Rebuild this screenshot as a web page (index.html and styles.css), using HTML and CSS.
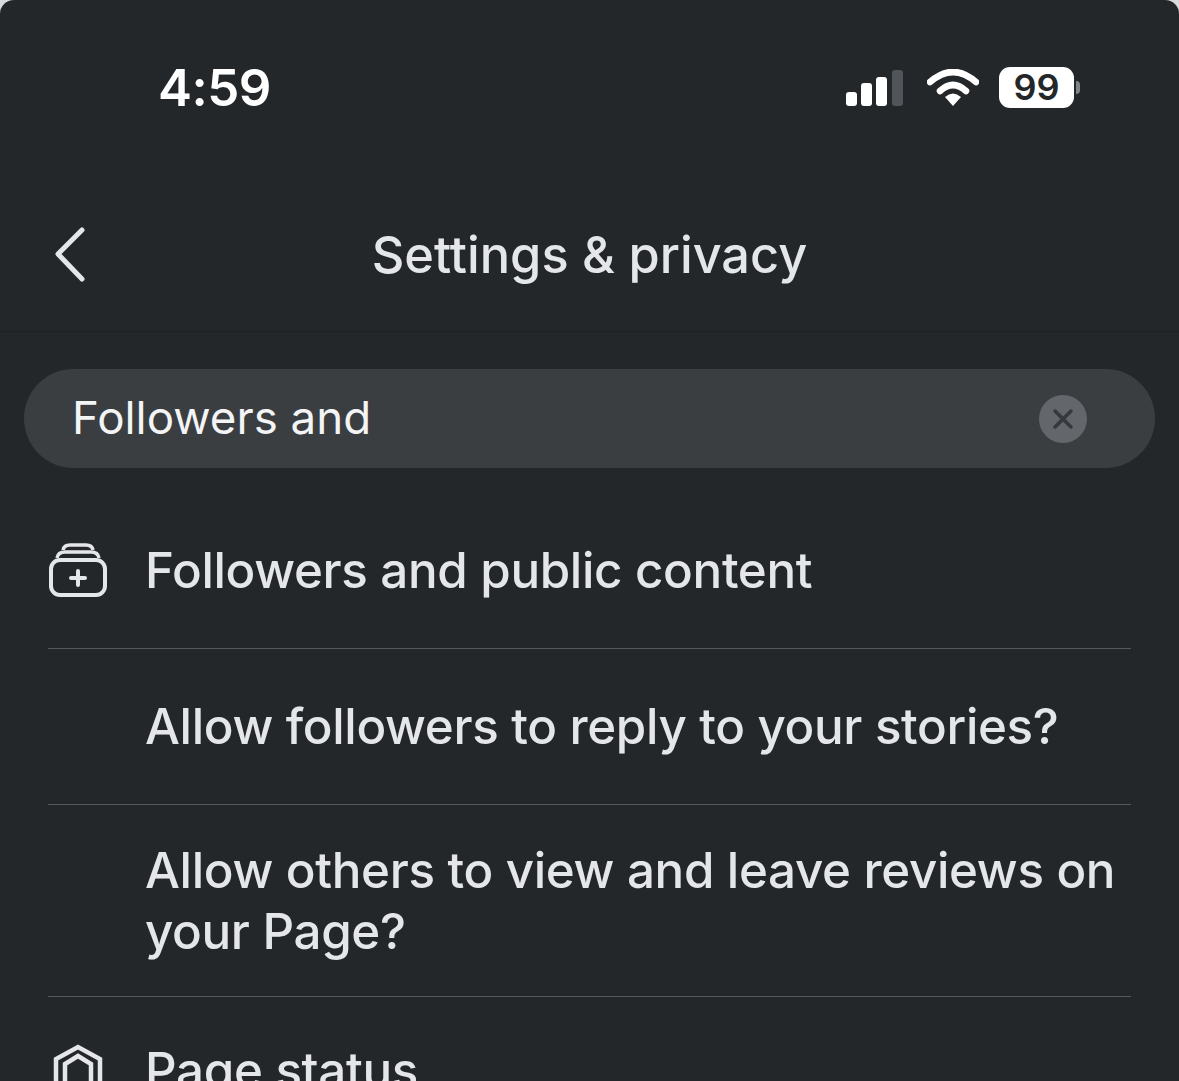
FILE: index.html
```html
<!DOCTYPE html>
<html lang="en">
<head>
  <meta charset="UTF-8" />
  <meta name="viewport" content="width=device-width, initial-scale=1.0"/>
  <title>Settings &amp; privacy</title>
  <link rel="stylesheet" href="styles.css">
</head>
<body>
  <div class="screen">
    <div class="status-bar">
      <span class="clock">4:59</span>
      <div class="status-icons">
        <svg class="signal" width="58" height="38" viewBox="0 0 58 38">
          <rect x="0" y="23" width="11" height="14" rx="3" fill="#fff"/>
          <rect x="15" y="14" width="11" height="23" rx="3" fill="#fff"/>
          <rect x="30" y="8" width="11" height="29" rx="3" fill="#fff"/>
          <rect x="46" y="1" width="11" height="36" rx="3" fill="#50555a"/>
        </svg>
        <svg class="wifi" width="52" height="38" viewBox="0 0 52 38">
          <path d="M3 13 Q26 -7 49 13" fill="none" stroke="#fff" stroke-width="6.5" stroke-linecap="round"/>
          <path d="M13 22 Q26 10 39 22" fill="none" stroke="#fff" stroke-width="6.5" stroke-linecap="round"/>
          <path d="M18 28 Q26 21 34 28 L26 37 Z" fill="#fff"/>
        </svg>
        <div class="battery">
          <span class="battery-body">99</span>
          <span class="battery-tip"></span>
        </div>
      </div>
    </div>

    <header class="nav">
      <svg class="back" width="34" height="58" viewBox="0 0 34 58">
        <path d="M28 4 L4 28 L28 53" fill="none" stroke="#e4e6e9" stroke-width="5" stroke-linecap="round" stroke-linejoin="round"/>
      </svg>
      <h1>Settings &amp; privacy</h1>
    </header>

    <div class="search">
      <span class="search-text">Followers and</span>
      <span class="search-clear">
        <svg width="48" height="48" viewBox="0 0 48 48">
          <path d="M16 16 L32 32 M32 16 L16 32" stroke="#35383c" stroke-width="3.5" stroke-linecap="round"/>
        </svg>
      </span>
    </div>

    <ul class="results">
      <li class="row">
        <svg class="row-icon" width="58" height="54" viewBox="0 0 58 54">
          <rect x="2" y="17" width="54" height="35" rx="9" fill="none" stroke="#e4e6e9" stroke-width="4"/>
          <path d="M8 15 Q9 9 16 9 H42 Q49 9 50 15" fill="none" stroke="#e4e6e9" stroke-width="3.5"/>
          <path d="M14 7 Q15 2 21 2 H37 Q43 2 44 7" fill="none" stroke="#e4e6e9" stroke-width="3.5"/>
          <path d="M29 28 V42 M22 35 H36" stroke="#e4e6e9" stroke-width="4" stroke-linecap="round"/>
        </svg>
        <span>Followers and public content</span>
      </li>
      <li class="row">
        <span>Allow followers to reply to your stories?</span>
      </li>
      <li class="row">
        <span>Allow others to view and leave reviews on your Page?</span>
      </li>
      <li class="row row-last">
        <svg class="row-icon" width="60" height="60" viewBox="0 0 60 60">
          <path d="M6 50 V15 L28 3 L50 15 V50" fill="none" stroke="#e4e6e9" stroke-width="4.5"/>
          <path d="M15 50 V20 L28 12 L41 20 V50" fill="none" stroke="#e4e6e9" stroke-width="4.5"/>
        </svg>
        <span>Page status</span>
      </li>
    </ul>
  </div>
</body>
</html>
```

FILE: styles.css
```css
html, body { margin: 0; height: 100%; overflow: hidden; background: #d9dadb; }
body { font-family: Inter, "Liberation Sans", sans-serif; color: #e4e6e9; }

.screen { background: #24272a; height: 1081px; border-radius: 14px 14px 0 0; overflow: hidden; }

.status-bar { height: 174px; display: flex; align-items: flex-start; justify-content: space-between; padding: 0 99px 0 158px; }
.clock { font-size: 51px; font-weight: 600; letter-spacing: -0.5px; color: #fff; line-height: 62px; margin-top: 57px; }
.status-icons { display: flex; align-items: center; margin-top: 67px; }
.wifi { margin-left: 23px; }
.battery { display: flex; align-items: center; margin-left: 20px; }
.battery-body { display: block; width: 75px; height: 41px; background: #fff; color: #24272a; border-radius: 11px; font-size: 36px; font-weight: 600; line-height: 41px; text-align: center; }
.battery-tip { width: 4px; height: 13px; background: #80848a; border-radius: 0 4px 4px 0; margin-left: 2px; }

.nav { height: 157px; border-bottom: 1px solid #1f2225; display: flex; align-items: center; justify-content: center; position: relative; }
.nav h1 { margin: 0 0 -4px; font-size: 50.5px; font-weight: 550; line-height: 60px; }
.back { position: absolute; left: 54px; top: 52px; }

.search { margin: 37px 24px 0; height: 99px; border-radius: 50px; background: #3b3e41; display: flex; align-items: center; justify-content: space-between; padding: 0 68px 0 48px; }
.search-text { font-size: 45.7px; color: #f3f4f5; margin-top: -2px; }
.search-clear { width: 48px; height: 48px; border-radius: 50%; background: #63666a; display: block; }
.search-clear svg { display: block; }

.results { list-style: none; margin: 25px 48px 0; padding: 0; }
.row { position: relative; display: flex; align-items: center; min-height: 155px; padding: 0 0 0 97px; border-bottom: 1px solid #55585c; font-size: 49.3px; font-weight: 450; letter-spacing: -0.33px; line-height: 61px; }
.row:nth-child(3) { padding-top: 34.5px; padding-bottom: 34.5px; min-height: 0; }
.row-last { border-bottom: none; align-items: flex-start; padding-top: 43px; }
.row-icon { position: absolute; left: 1px; top: 50px; }
.row-last .row-icon { top: 47px; left: 2px; }
```
